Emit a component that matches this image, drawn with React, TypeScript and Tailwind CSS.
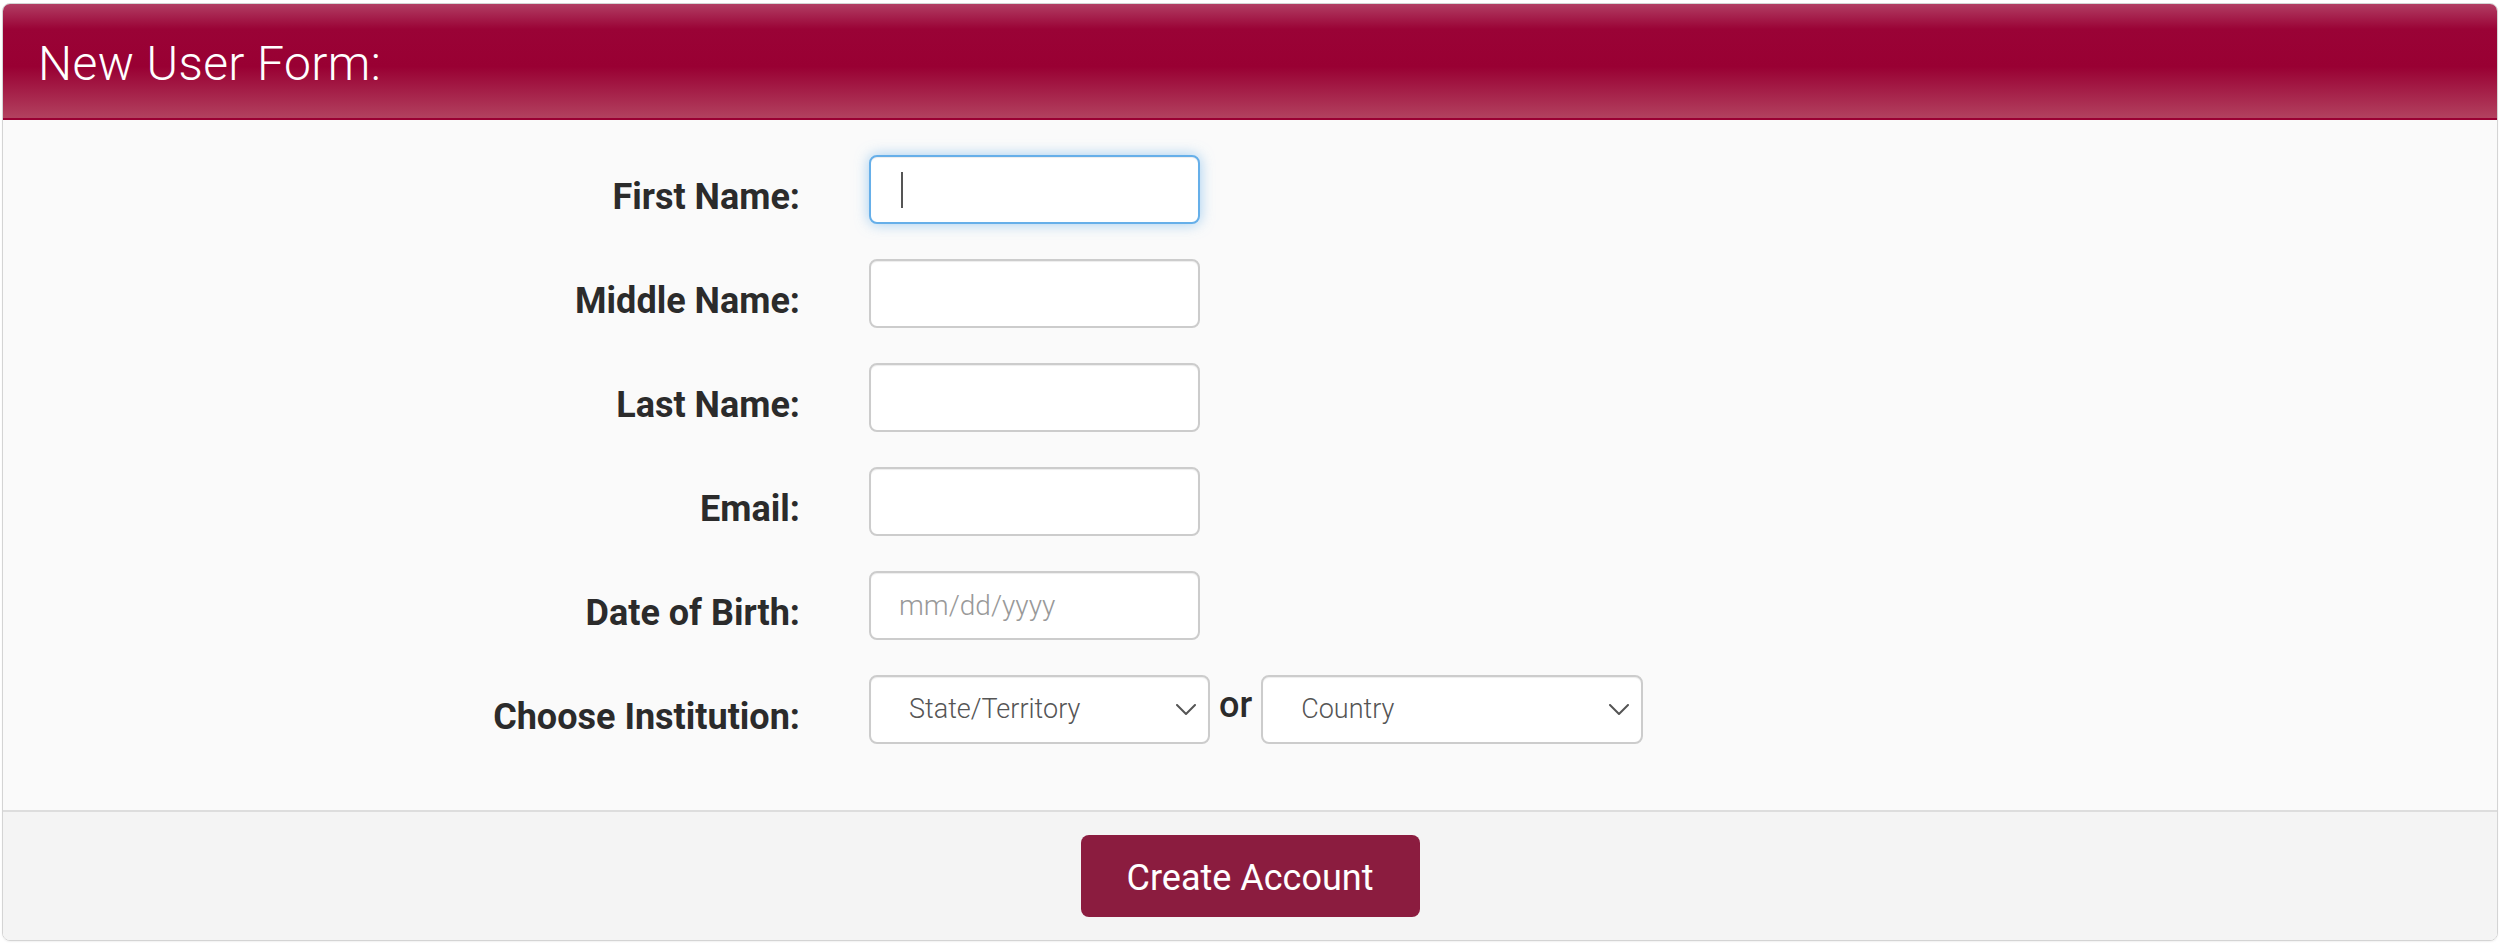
import React from "react";

const FIELDS = [
  { id: "first", label: "First Name:", focused: true },
  { id: "middle", label: "Middle Name:" },
  { id: "last", label: "Last Name:" },
  { id: "email", label: "Email:" },
];

function Chevron() {
  return (
    <svg width="20" height="12" viewBox="0 0 20 12" fill="none" className="flex-shrink-0">
      <polyline points="1,1 10,10 19,1" stroke="#555" strokeWidth="2" strokeLinecap="round" strokeLinejoin="round" />
    </svg>
  );
}

function Label({ children }: { children: React.ReactNode }) {
  return (
    <div className="w-[797px] h-[69px] flex-shrink-0 text-right pt-[16px] leading-[53px] text-[36px] font-bold text-[#2b2b2b]">
      {children}
    </div>
  );
}

function Select({ label, width }: { label: string; width: string }) {
  return (
    <div
      className={`${width} h-[69px] flex items-center pl-[38px] pr-[12px] bg-white border-2 border-[#cccccc] rounded-[8px] shadow-[inset_0_1px_1px_rgba(0,0,0,0.075)]`}
    >
      <span className="flex-1 text-[27px] font-light text-[#555]">{label}</span>
      <Chevron />
    </div>
  );
}

export default function App() {
  return (
    <div className="min-h-screen bg-white font-['Roboto','Liberation_Sans',sans-serif] pt-[3px] pl-[2px]">
      <div className="w-[2496px] border border-[#d4d4d4] rounded-[8px] overflow-hidden shadow-[0_1px_2px_rgba(0,0,0,0.06)]">
        {/* Header */}
        <div className="h-[116px] flex items-center pl-[35px] pt-[5px] border-b-2 border-[#990033] bg-[linear-gradient(to_bottom,#b13d63_0%,#9a0336_22%,#990033_55%,#b2415f_100%)]">
          <h1 className="text-[48px] font-light text-white tracking-[0.4px]">New User Form:</h1>
        </div>

        {/* Body */}
        <div className="bg-[#fafafa] pt-[35px] pb-[66px] flex flex-col gap-[35px]">
          {FIELDS.map((f) => (
            <div key={f.id} className="flex items-start gap-[69px]">
              <Label>{f.label}</Label>
              {f.focused ? (
                <div className="w-[331px] h-[69px] flex items-center pl-[30px] bg-white border-2 border-[#66afe9] rounded-[8px] shadow-[inset_0_1px_1px_rgba(0,0,0,0.075),0_0_14px_rgba(102,175,233,0.6)]">
                  <span className="w-[2px] h-[36px] bg-[#555]" />
                </div>
              ) : (
                <input
                  type="text"
                  className="w-[331px] h-[69px] px-[30px] text-[28px] bg-white border-2 border-[#cccccc] rounded-[8px] outline-none shadow-[inset_0_1px_1px_rgba(0,0,0,0.075)]"
                />
              )}
            </div>
          ))}

          <div className="flex items-start gap-[69px]">
            <Label>Date of Birth:</Label>
            <input
              type="text"
              placeholder="mm/dd/yyyy"
              className="w-[331px] h-[69px] px-[28px] text-[28px] font-light text-[#555] placeholder:text-[#999] bg-white border-2 border-[#cccccc] rounded-[8px] outline-none shadow-[inset_0_1px_1px_rgba(0,0,0,0.075)]"
            />
          </div>

          <div className="flex items-start gap-[69px]">
            <Label>Choose Institution:</Label>
            <div className="flex items-start">
              <Select label="State/Territory" width="w-[341px]" />
              <span className="px-[9px] leading-[61px] text-[36px] font-medium text-[#2b2b2b]">or</span>
              <Select label="Country" width="w-[382px]" />
            </div>
          </div>
        </div>

        {/* Footer */}
        <div className="h-[130px] flex items-center justify-center bg-[#f4f4f4] border-t-2 border-[#dddddd]">
          <button className="w-[339px] h-[82px] pt-[3px] rounded-[8px] bg-[#8b1c3f] text-white text-[36px]">
            Create Account
          </button>
        </div>
      </div>
    </div>
  );
}
